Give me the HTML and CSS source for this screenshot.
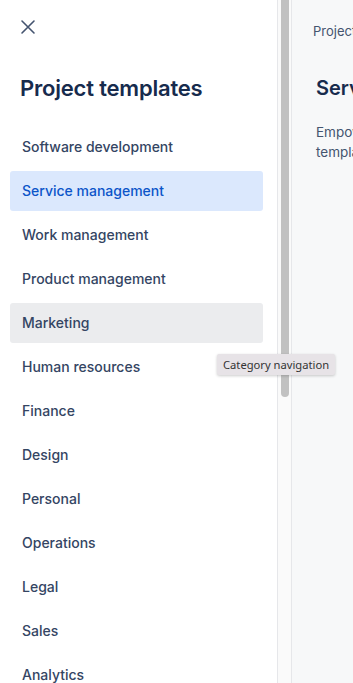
FILE: index.html
```html
<!DOCTYPE html>
<html>
<head>
<meta charset="utf-8">
<link rel="stylesheet" href="styles.css">
</head>
<body>
<div class="app">
  <aside class="sidebar">
    <button class="close" aria-label="Close">
      <svg width="16" height="16" viewBox="0 0 16 16"><path d="M2 2 L14 14 M14 2 L2 14" stroke="#44546f" stroke-width="1.6" stroke-linecap="round" fill="none"/></svg>
    </button>
    <h1 class="title">Project templates</h1>
    <nav class="cats">
      <a class="cat">Software development</a>
      <a class="cat active">Service management</a>
      <a class="cat">Work management</a>
      <a class="cat">Product management</a>
      <a class="cat hover">Marketing</a>
      <a class="cat">Human resources</a>
      <a class="cat">Finance</a>
      <a class="cat">Design</a>
      <a class="cat">Personal</a>
      <a class="cat">Operations</a>
      <a class="cat">Legal</a>
      <a class="cat">Sales</a>
      <a class="cat">Analytics</a>
    </nav>
  </aside>
  <div class="scrolltrack"><div class="thumb"></div></div>
  <main class="main">
    <div class="crumb">Projects</div>
    <h2 class="mtitle">Service</h2>
    <p class="desc">Empower<br>templates</p>
  </main>
  <div class="tooltip">Category navigation</div>
</div>
</body>
</html>
```
FILE: styles.css
```css
html, body {
  margin: 0;
  padding: 0;
  height: 100%;
  overflow: hidden;
  font-family: Inter, "Noto Sans", sans-serif;
  color: #172b4d;
}
.app {
  display: flex;
  height: 683px;
  position: relative;
}
.sidebar {
  flex: none;
  box-sizing: border-box;
  border-right: 1px solid #e6e7ea;
  background: #fff;
  padding: 11px 14px 0 10px;
  width: 278px;
}
.close {
  width: 32px;
  height: 32px;
  margin-left: 2px;
  border: 0;
  background: none;
  padding: 0;
  display: flex;
  align-items: center;
  justify-content: center;
}
.title {
  margin: 29px 0 0 10px;
  font-size: 22px;
  line-height: 32px;
  font-weight: 600;
  color: #172b4d;
  letter-spacing: -0.2px;
}
.cats {
  display: flex;
  flex-direction: column;
  gap: 4px;
  margin-top: 23px;
}
.cat {
  display: flex;
  align-items: center;
  box-sizing: border-box;
  height: 40px;
  padding: 0 0 2px 12px;
  border-radius: 3px;
  font-size: 14px;
  font-weight: 500;
  color: #344563;
  flex: none;
}
.cat.active {
  background: #dbe8fd;
  color: #0c55c9;
}
.cat.hover {
  background: #ebecee;
}
.scrolltrack {
  width: 13px;
  flex: none;
  background: #fafafa;
  border-right: 1px solid #e6e7ea;
}
.thumb {
  width: 8px;
  height: 397px;
  margin-left: 3px;
  background: #c1c1c1;
  border-radius: 0 0 4px 4px;
}
.main {
  flex: 1;
  background: #f7f8f9;
  padding: 22px 0 0 21px;
  white-space: nowrap;
  overflow: hidden;
}
.crumb {
  font-size: 13px;
  line-height: 18px;
  color: #44546f;
}
.mtitle {
  margin: 34px 0 0 3px;
  font-size: 20px;
  line-height: 28px;
  font-weight: 600;
  color: #172b4d;
}
.desc {
  margin: 20px 0 0 3px;
  font-size: 13.5px;
  line-height: 20px;
  color: #44546f;
}
.tooltip {
  position: absolute;
  left: 217px;
  top: 354px;
  height: 21px;
  padding: 0 6px;
  display: flex;
  align-items: center;
  background: #e7e3e7;
  color: #333;
  font-size: 11.2px;
  box-shadow: 0 1px 3px rgba(0,0,0,0.2);
  border-radius: 2px;
  font-family: "Noto Sans", Inter, sans-serif;
}
```
